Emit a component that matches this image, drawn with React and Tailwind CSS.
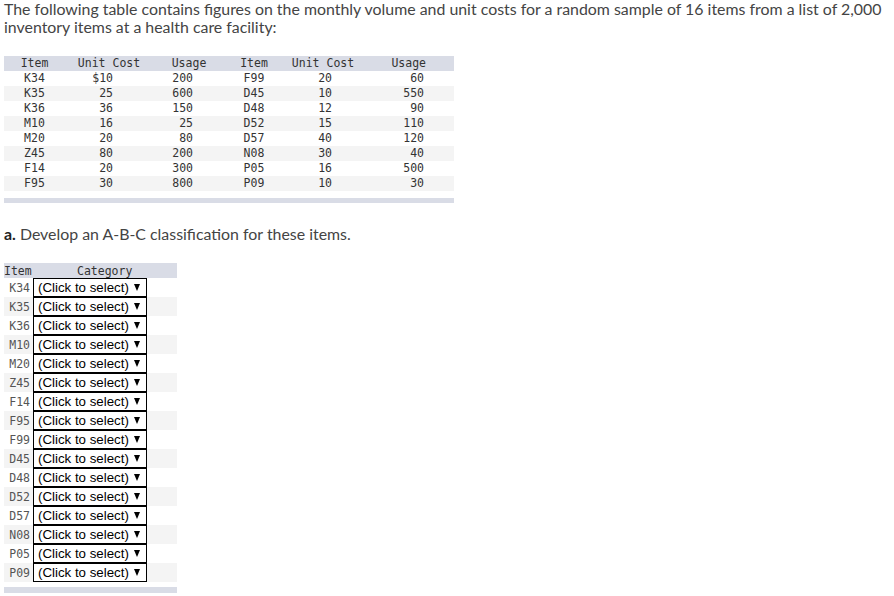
import React from "react";

const top = [
  ["K34", "$10", "200", "F99", "20", "60"],
  ["K35", "25", "600", "D45", "10", "550"],
  ["K36", "36", "150", "D48", "12", "90"],
  ["M10", "16", "25", "D52", "15", "110"],
  ["M20", "20", "80", "D57", "40", "120"],
  ["Z45", "80", "200", "N08", "30", "40"],
  ["F14", "20", "300", "P05", "16", "500"],
  ["F95", "30", "800", "P09", "10", "30"],
];

const items = ["K34","K35","K36","M10","M20","Z45","F14","F95","F99","D45","D48","D52","D57","N08","P05","P09"];

const mono = "font-['DejaVu_Sans_Mono',monospace]";

export default function App() {
  return (
    <div className="w-[894px] h-[596px] bg-white pl-[4px] overflow-hidden">
      <p className="font-['Lato',sans-serif] text-[15.9px] leading-[18px] text-[#444] w-[888px]">
        The following table contains figures on the monthly volume and unit costs for a random sample of 16 items from a list of 2,000 inventory items at a health care facility:
      </p>

      <div className={`mt-[20px] w-[450px] ${mono} text-[11.5px] text-[#333]`}>
        <div className="grid grid-cols-[61px_88px_72px_58px_80px_91px] h-[15px] leading-[15px] bg-[#d9dce6]">
          <div className="text-center">Item</div>
          <div className="text-center">Unit Cost</div>
          <div className="text-center">Usage</div>
          <div className="text-center">Item</div>
          <div className="text-center">Unit Cost</div>
          <div className="text-right pr-[28px]">Usage</div>
        </div>
        {top.map((r, i) => (
          <div key={i} className={`grid grid-cols-[61px_88px_72px_58px_80px_91px] h-[15px] leading-[15px] ${i % 2 === 1 ? "bg-[#f4f4f4]" : "bg-white"}`}>
            <div className="text-center">{r[0]}</div>
            <div className="text-right pr-[40px]">{r[1]}</div>
            <div className="text-right pr-[32px]">{r[2]}</div>
            <div className="text-center">{r[3]}</div>
            <div className="text-right pr-[31px]">{r[4]}</div>
            <div className="text-right pr-[30px]">{r[5]}</div>
          </div>
        ))}
        <div className="mt-[7px] h-[5px] bg-[#d9dce6]"></div>
      </div>

      <p className="mt-[22px] font-['Lato',sans-serif] text-[15.9px] leading-[18px] text-[#444]">
        <span className="font-bold text-[#222]">a.</span> Develop an A-B-C classification for these items.
      </p>

      <div className={`mt-[20px] w-[173px] ${mono} text-[11.5px]`}>
        <div className="flex h-[15px] leading-[16px] bg-[#d9dce6] text-[#333]">
          <div className="w-[73px]">Item</div>
          <div>Category</div>
        </div>
        {items.map((it, i) => (
          <div key={it} className={`flex h-[19px] items-stretch ${i % 2 === 1 ? "bg-[#f4f4f4]" : "bg-white"}`}>
            <div className="w-[29px] pr-[3px] text-right leading-[20px] text-[#555]">{it}</div>
            <div className="w-[114px] border border-black bg-white flex items-center pl-[4px] font-['Liberation_Sans',Arial,sans-serif] text-[13.3px] text-black leading-none">
              <span>(Click to select)</span>
              <svg className="ml-[5px]" width="6" height="7" viewBox="0 0 6 7">
                <polygon points="0,0 6,0 3,7" fill="#000" />
              </svg>
            </div>
          </div>
        ))}
        <div className="mt-[5px] h-[6px] bg-[#d9dce6]"></div>
      </div>
    </div>
  );
}
